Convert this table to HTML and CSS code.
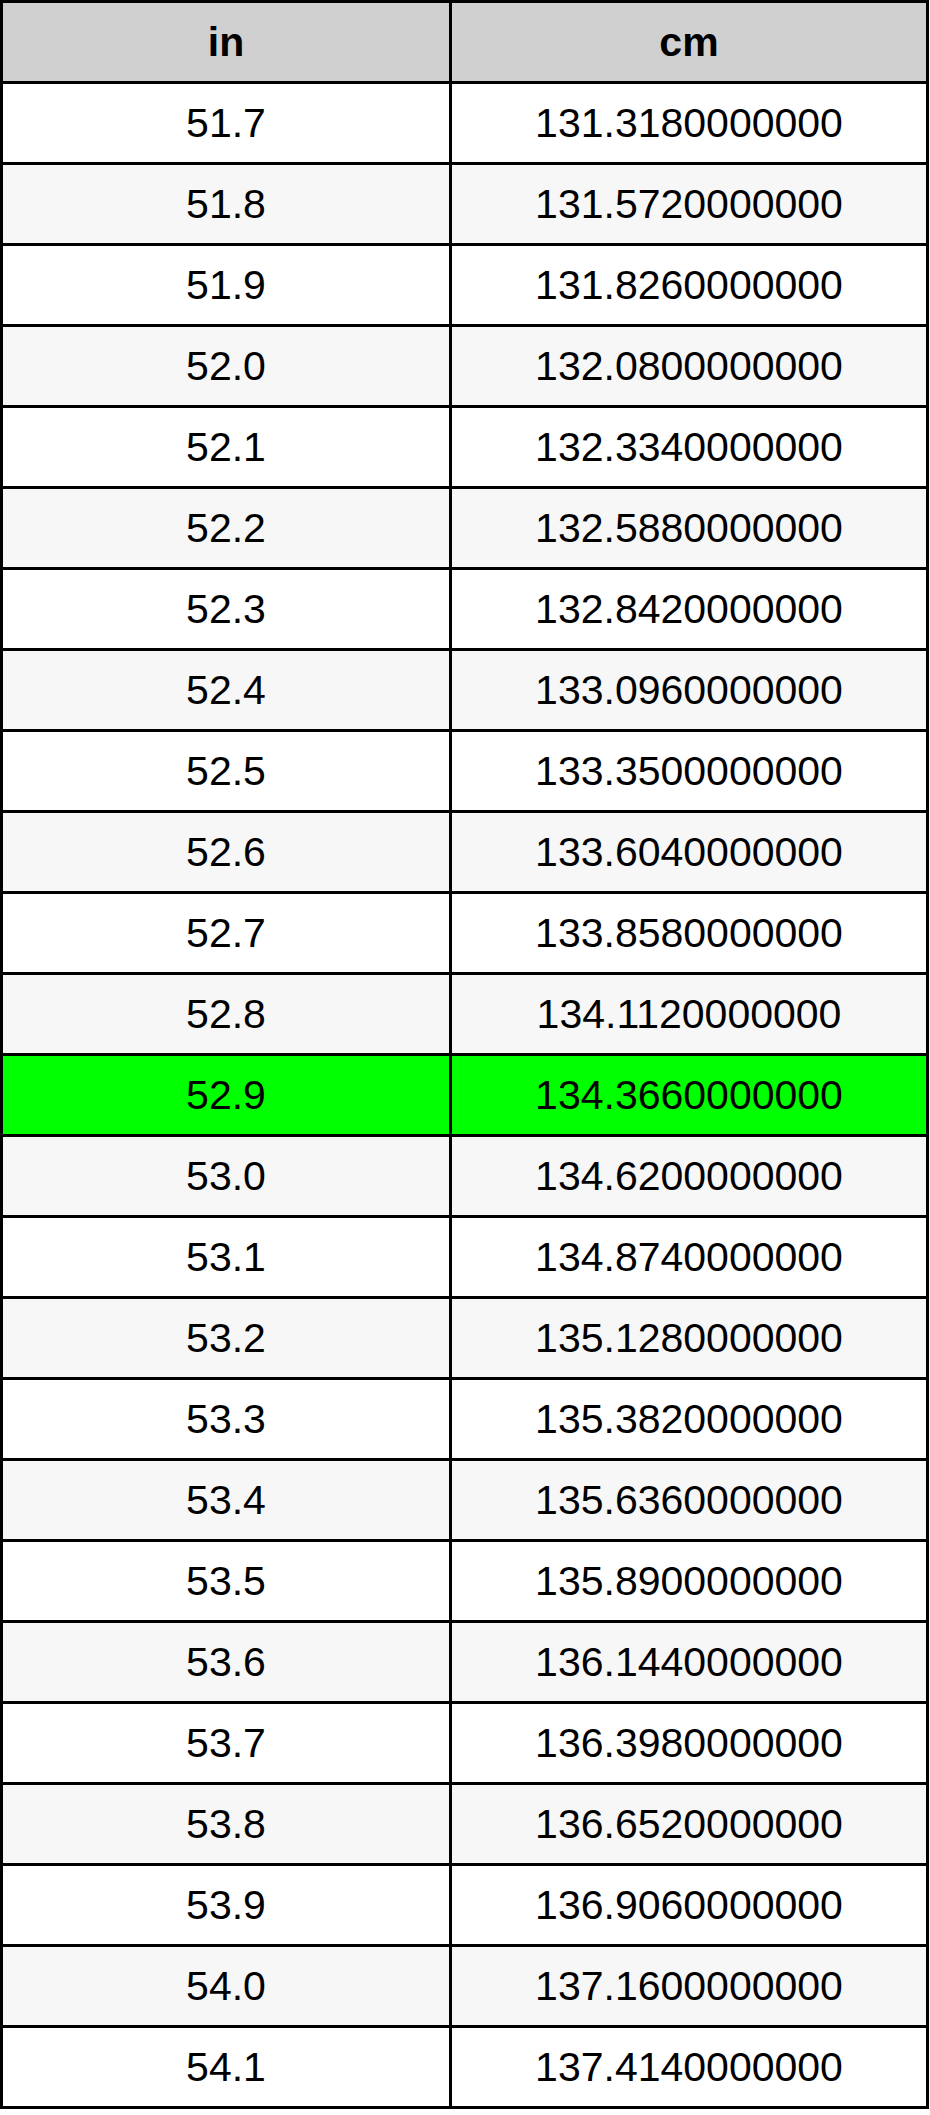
FILE: index.html
```html
<!DOCTYPE html>
<html>
<head>
<meta charset="utf-8">
<link rel="stylesheet" href="styles.css">
</head>
<body>
<table class="conv">
<colgroup><col class="c1"><col class="c2"></colgroup>
<thead><tr><th>in</th><th>cm</th></tr></thead>
<tbody>
<tr><td>51.7</td><td>131.3180000000</td></tr>
<tr class="alt"><td>51.8</td><td>131.5720000000</td></tr>
<tr><td>51.9</td><td>131.8260000000</td></tr>
<tr class="alt"><td>52.0</td><td>132.0800000000</td></tr>
<tr><td>52.1</td><td>132.3340000000</td></tr>
<tr class="alt"><td>52.2</td><td>132.5880000000</td></tr>
<tr><td>52.3</td><td>132.8420000000</td></tr>
<tr class="alt"><td>52.4</td><td>133.0960000000</td></tr>
<tr><td>52.5</td><td>133.3500000000</td></tr>
<tr class="alt"><td>52.6</td><td>133.6040000000</td></tr>
<tr><td>52.7</td><td>133.8580000000</td></tr>
<tr class="alt"><td>52.8</td><td>134.1120000000</td></tr>
<tr class="hl"><td>52.9</td><td>134.3660000000</td></tr>
<tr class="alt"><td>53.0</td><td>134.6200000000</td></tr>
<tr><td>53.1</td><td>134.8740000000</td></tr>
<tr class="alt"><td>53.2</td><td>135.1280000000</td></tr>
<tr><td>53.3</td><td>135.3820000000</td></tr>
<tr class="alt"><td>53.4</td><td>135.6360000000</td></tr>
<tr><td>53.5</td><td>135.8900000000</td></tr>
<tr class="alt"><td>53.6</td><td>136.1440000000</td></tr>
<tr><td>53.7</td><td>136.3980000000</td></tr>
<tr class="alt"><td>53.8</td><td>136.6520000000</td></tr>
<tr><td>53.9</td><td>136.9060000000</td></tr>
<tr class="alt"><td>54.0</td><td>137.1600000000</td></tr>
<tr><td>54.1</td><td>137.4140000000</td></tr>
</tbody>
</table>
</body>
</html>
```
FILE: styles.css
```css
html, body {
  margin: 0;
  padding: 0;
  background: #ffffff;
}
.conv {
  border-collapse: separate;
  border-spacing: 0;
  table-layout: fixed;
  width: 929px;
  border-top: 3px solid #000;
  border-left: 3px solid #000;
  font-family: "Liberation Sans", Arial, sans-serif;
  font-size: 41px;
  color: #000;
}
.c1 { width: 449px; }
.c2 { width: 477px; }
.conv th, .conv td {
  box-sizing: border-box;
  height: 81px;
  padding: 0;
  text-align: center;
  vertical-align: middle;
  border-right: 3px solid #000;
  border-bottom: 3px solid #000;
  line-height: 1;
}
.conv th {
  background: #d0d0d0;
  font-weight: bold;
}
.conv td { background: #ffffff; }
.conv tr.alt td { background: #f7f7f7; }
.conv tr.hl td { background: #00ff00; }
```
